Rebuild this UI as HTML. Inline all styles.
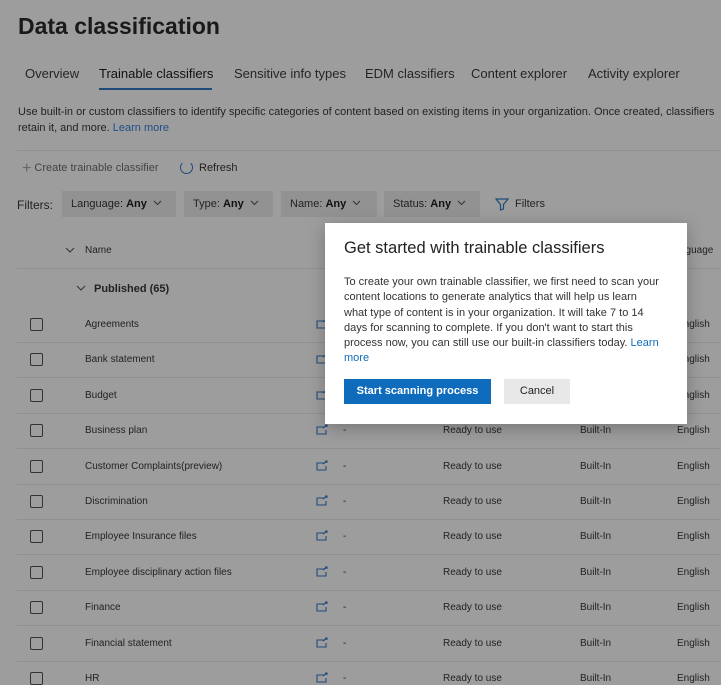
<!DOCTYPE html>
<html><head><meta charset="utf-8"><style>
*{margin:0;padding:0;box-sizing:border-box}
body{width:721px;height:684px;overflow:hidden;background:#9d9d9d;font-family:"Liberation Sans",sans-serif;color:#1f1f1f;position:relative}
.a{position:absolute;white-space:nowrap}
.t{font-size:13px;color:#252525}
.s{font-size:10px;color:#222}
.hl{position:absolute;left:17px;right:0;height:1px;background:#909090}
.fb{position:absolute;top:191px;height:26px;background:#929292;font-size:11px;line-height:26px;padding-left:9px;color:#222}
.fb b{color:#111}
.fb svg{margin-left:6px;vertical-align:1px}
.cb{position:absolute;left:30px;width:13px;height:13px;border:1px solid #333;border-radius:2px}
.ic{position:absolute;left:316px}
</style></head><body>
<div class="a" style="left:18px;top:13px;font-size:23px;font-weight:bold;color:#1a1a1a">Data classification</div>
<div class="a t" style="left:25px;top:66px">Overview</div>
<div class="a t" style="left:99px;top:66px;color:#111">Trainable classifiers</div>
<div class="a" style="left:99px;top:88px;width:113px;height:2px;background:#1f4b7a"></div>
<div class="a t" style="left:234px;top:66px">Sensitive info types</div>
<div class="a t" style="left:365px;top:66px">EDM classifiers</div>
<div class="a t" style="left:471px;top:66px">Content explorer</div>
<div class="a t" style="left:588px;top:66px">Activity explorer</div>
<div class="a" style="left:18px;top:104px;font-size:11px;line-height:16px;color:#222">Use built-in or custom classifiers to identify specific categories of content based on existing items in your organization. Once created, classifiers<br>retain it, and more. <span style="color:#1f4f88">Learn more</span></div>
<div class="hl" style="top:150px"></div>
<div class="a" style="left:22px;top:160px;font-size:11px;color:#444"><span style="font-size:16px;color:#666;vertical-align:-2px">+</span> Create trainable classifier</div>
<div class="a" style="left:180px;top:161px;width:13px;height:13px;border:1.5px solid #1f4b7a;border-radius:50%;border-top-color:transparent"></div>
<div class="a" style="left:199px;top:162px;font-size:11px;color:#222">Refresh</div>
<div class="a" style="left:17px;top:198px;font-size:12px;color:#222">Filters:</div>
<div class="fb" style="left:62px;width:114px">Language: <b>Any</b><svg width="9" height="6"><path d="M1 1l3.5 3.5L8 1" fill="none" stroke="#333"/></svg></div>
<div class="fb" style="left:184px;width:89px">Type: <b>Any</b><svg width="9" height="6"><path d="M1 1l3.5 3.5L8 1" fill="none" stroke="#333"/></svg></div>
<div class="fb" style="left:281px;width:96px">Name: <b>Any</b><svg width="9" height="6"><path d="M1 1l3.5 3.5L8 1" fill="none" stroke="#333"/></svg></div>
<div class="fb" style="left:384px;width:96px">Status: <b>Any</b><svg width="9" height="6"><path d="M1 1l3.5 3.5L8 1" fill="none" stroke="#333"/></svg></div>
<svg class="a" style="left:495px;top:197px" width="14" height="14"><path d="M1 2h12L8.5 7.5V12L5.5 13V7.5Z" fill="none" stroke="#1f4b7a" stroke-width="1.2"/></svg>
<div class="a" style="left:515px;top:198px;font-size:11px;color:#222">Filters</div>
<svg class="a" style="left:65px;top:247px" width="10" height="6"><path d="M1 1l4 4 4-4" fill="none" stroke="#333"/></svg>
<div class="a s" style="left:85px;top:245px">Name</div>
<div class="a s" style="left:680px;top:245px">nguage</div>
<div class="hl" style="top:268px"></div>
<svg class="a" style="left:76px;top:285px" width="10" height="6"><path d="M1 1l4 4 4-4" fill="none" stroke="#333"/></svg>
<div class="a" style="left:94px;top:283px;font-size:11px;font-weight:bold;color:#222">Published (65)</div>

<div id="rows"></div>
<script>
var names=["Agreements","Bank statement","Budget","Business plan","Customer Complaints(preview)","Discrimination","Employee Insurance files","Employee disciplinary action files","Finance","Financial statement","HR"];
var h="";
names.forEach(function(n,i){var y=Math.round(324+i*35.4);
h+='<div class="cb" style="top:'+(y-6)+'px"></div>';
h+='<div class="a s" style="left:85px;top:'+(y-5)+'px">'+n+'</div>';
h+='<svg class="ic" style="top:'+(y-6)+'px" width="13" height="12"><path d="M8 3H1v7h9V6M7 4l4-3M9 1h2v2" fill="none" stroke="#1f4b7a" stroke-width="1.1"/></svg>';
h+='<div class="a s" style="left:343px;top:'+(y-5)+'px">-</div>';
h+='<div class="a s" style="left:443px;top:'+(y-5)+'px">Ready to use</div>';
h+='<div class="a s" style="left:580px;top:'+(y-5)+'px">Built-In</div>';
h+='<div class="a s" style="left:677px;top:'+(y-5)+'px">English</div>';
if(i<10)h+='<div class="hl" style="top:'+(y+18)+'px"></div>';});
document.getElementById("rows").innerHTML=h;
</script>

<div class="a" style="left:325px;top:223px;width:362px;height:201px;background:#fff;box-shadow:0 4px 16px rgba(0,0,0,.25)">
<div class="a" style="left:19px;top:16px;font-size:16.5px;color:#222">Get started with trainable classifiers</div>
<div class="a" style="left:19px;top:52px;font-size:11px;line-height:15.3px;color:#333">To create your own trainable classifier, we first need to scan your<br>content locations to generate analytics that will help us learn<br>what type of content is in your organization. It will take 7 to 14<br>days for scanning to complete. If you don't want to start this<br>process now, you can still use our built-in classifiers today. <span style="color:#0f6cbd">Learn</span><br><span style="color:#0f6cbd">more</span></div>
<div class="a" style="left:19px;top:156px;width:147px;height:25px;background:#0f6cbd;color:#fff;font-size:11px;font-weight:bold;text-align:center;line-height:25px">Start scanning process</div>
<div class="a" style="left:179px;top:156px;width:66px;height:25px;background:#e8e8e8;color:#222;font-size:11px;text-align:center;line-height:25px">Cancel</div>
</div>
</body></html>
